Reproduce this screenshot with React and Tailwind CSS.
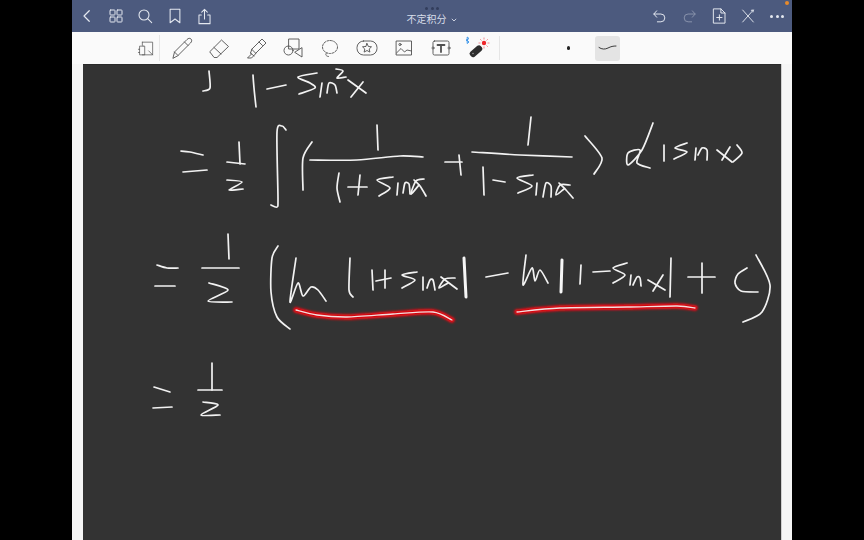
import React from "react";

const spline = (p) => {
  if (p.length === 2) return `M${p[0][0]} ${p[0][1]}L${p[1][0]} ${p[1][1]}`;
  let d = `M${p[0][0]} ${p[0][1]}`;
  for (let i = 0; i < p.length - 1; i++) {
    const a = p[Math.max(0, i - 1)], b = p[i], c = p[i + 1], e = p[Math.min(p.length - 1, i + 2)];
    const t = 0.14;
    d += `C${(b[0] + (c[0] - a[0]) * t).toFixed(1)} ${(b[1] + (c[1] - a[1]) * t).toFixed(1)} ${(c[0] - (e[0] - b[0]) * t).toFixed(1)} ${(c[1] - (e[1] - b[1]) * t).toFixed(1)} ${c[0]} ${c[1]}`;
  }
  return d;
};

const ink = [
  // first line
  [[209,71],[210,88],[203,91]],
  [[253,75],[254,88],[256,107]],
  [[267,89],[286,85]],
  [[317,73],[298,77],[310,83],[315,88],[299,94]],
  [[322,83],[320,97]],
  [[327,93],[329,83],[335,85],[337,93]],
  [[336,69],[343,71],[337,78],[346,77]],
  [[348,80],[366,93]],
  [[363,82],[351,97]],
  // second line
  [[181,151],[190,152],[203,155]],
  [[183,172],[207,170]],
  [[239,142],[240,164]],
  [[227,162],[245,164]],
  [[227,180],[242,182],[229,190],[243,189]],
  [[286,130],[282,126],[277,132],[278,198],[277,207],[271,205]],
  [[312,142],[303,158],[303,190]],
  [[310,160],[357,160],[400,156],[423,157]],
  [[377,125],[378,150]],
  [[339,173],[337,188],[340,202]],
  [[348,187],[367,187]],
  [[360,175],[358,195]],
  [[393,177],[377,180],[390,188],[379,196]],
  [[398,183],[397,195]],
  [[403,193],[405,183],[409,184],[410,194]],
  [[424,179],[416,181],[411,194],[419,185]],
  [[414,180],[420,186],[426,196]],
  [[445,162],[462,162]],
  [[459,155],[461,175]],
  [[472,152],[520,155],[572,157]],
  [[531,117],[528,145]],
  [[483,167],[484,195]],
  [[493,180],[505,182]],
  [[533,175],[517,178],[532,186],[518,193]],
  [[537,183],[536,195]],
  [[543,197],[546,183],[551,186],[551,197]],
  [[570,185],[560,185],[556,195],[564,189]],
  [[559,183],[566,190],[573,198]],
  [[585,136],[602,158],[594,174]],
  [[653,123],[642,150],[628,165],[628,153],[640,150],[637,163],[650,168]],
  [[664,145],[664,161]],
  [[687,143],[675,148],[687,152],[674,159]],
  [[696,148],[695,160]],
  [[698,155],[702,148],[707,150],[707,160]],
  [[717,150],[732,162]],
  [[730,147],[722,160]],
  [[737,145],[742,153],[733,162]],
  // third line
  [[157,265],[167,268],[178,268]],
  [[155,286],[175,286]],
  [[228,234],[229,259]],
  [[202,268],[239,268]],
  [[209,283],[228,290],[208,301],[232,302]],
  [[278,246],[272,258],[271,292],[277,317],[290,329]],
  [[296,258],[290,302],[298,283],[303,296],[311,287],[318,290],[326,301]],
  [[350,258],[349,290],[353,297]],
  [[372,270],[373,290]],
  [[376,281],[391,278]],
  [[385,270],[385,288]],
  [[417,272],[402,275],[415,280],[402,288]],
  [[423,277],[423,290]],
  [[427,288],[430,280],[433,280],[435,290]],
  [[455,278],[445,279],[439,288],[448,283]],
  [[441,277],[449,283],[457,289]],
  [[486,277],[508,273]],
  [[526,255],[523,285],[532,268],[535,281],[540,270],[548,283]],
  [[581,265],[580,284]],
  [[593,272],[610,271]],
  [[627,263],[613,268],[625,275],[613,283]],
  [[631,275],[630,285]],
  [[633,285],[637,277],[640,278],[641,286]],
  [[648,280],[665,290]],
  [[663,275],[653,291]],
  [[671,258],[670,297]],
  [[688,277],[715,277]],
  [[702,263],[702,293]],
  [[747,268],[738,274],[735,283],[741,291],[758,292]],
  [[756,255],[770,285],[762,312],[743,322]],
  // fourth line
  [[154,387],[170,392]],
  [[153,408],[172,407]],
  [[212,363],[212,390]],
  [[198,390],[222,390]],
  [[203,402],[218,405],[201,415],[220,415]],
];
const bold = [
  [[464,258],[466,297]],
  [[562,260],[561,292]],
];
const red = [
  [[296,310],[317,315],[347,317],[393,314],[433,312],[452,320]],
  [[517,312],[560,308],[627,307],[677,306],[695,308]],
];

const Ic = ({ children, size = 18, stroke = "#e4e8f0", sw = 1.3, opacity }) => (
  <svg width={size} height={size} viewBox="0 0 24 24" fill="none" stroke={stroke} strokeWidth={sw} strokeLinecap="round" strokeLinejoin="round" opacity={opacity}>
    {children}
  </svg>
);

const TopBtn = ({ children }) => (
  <div className="flex w-[29.4px] items-center justify-center">{children}</div>
);
const Tool = ({ children }) => (
  <div className="flex w-[37px] items-center justify-center">{children}</div>
);

const T = (p) => <Ic size={24} stroke="#505050" sw={0.9} {...p} />;

export default function App() {
  return (
    <div className="flex h-[540px] w-[864px] overflow-hidden bg-black font-['Liberation_Sans','Noto_Sans_CJK_SC',sans-serif]">
      <div className="w-[72px] shrink-0" />
      <div className="relative flex w-[720px] flex-col">
        {/* top bar */}
        <div className="relative flex h-8 items-center justify-between bg-[#4c5a7e]">
          <div className="flex">
            <TopBtn>
              <Ic size={18} sw={1.6}><path d="M15 5l-7 7 7 7" /></Ic>
            </TopBtn>
            <TopBtn>
              <Ic size={16} sw={1.5}>
                <rect x="3" y="3" width="7.5" height="7.5" rx="1" />
                <rect x="13.5" y="3" width="7.5" height="7.5" rx="1" />
                <rect x="3" y="13.5" width="7.5" height="7.5" rx="1" />
                <rect x="13.5" y="13.5" width="7.5" height="7.5" rx="1" />
              </Ic>
            </TopBtn>
            <TopBtn>
              <Ic size={16} sw={1.6}><circle cx="10.5" cy="10.5" r="7.5" /><path d="M16 16l6 6" /></Ic>
            </TopBtn>
            <TopBtn>
              <Ic size={18} sw={1.4}><path d="M5.500 3h13v18L12 16l-6.500 5z" /></Ic>
            </TopBtn>
            <TopBtn>
              <Ic size={19} sw={1.3}><path d="M8 10H5v11h14V10h-3M12 15V3M8.500 6.500L12 3l3.500 3.500" /></Ic>
            </TopBtn>
          </div>
          <div className="absolute inset-x-0 top-0 flex flex-col items-center">
            <div className="mt-[6.5px] flex gap-[2.5px]">
              <span className="h-[3px] w-[3px] rounded-full bg-[#323d5c]" />
              <span className="h-[3px] w-[3px] rounded-full bg-[#323d5c]" />
              <span className="h-[3px] w-[3px] rounded-full bg-[#323d5c]" />
            </div>
            <div className="mt-[3px] -ml-[1px] flex items-center gap-[4px] text-[10px] leading-[14px] text-[#d9deea]">
              <span>不定积分</span>
              <svg width="6" height="4" viewBox="0 0 6 4" fill="none" stroke="#d9deea" strokeWidth="0.9"><path d="M0.8 0.8L3 3l2.2-2.2" /></svg>
            </div>
          </div>
          <div className="flex">
            <TopBtn>
              <Ic size={17} sw={1.4}><path d="M8 4L4 8.500 8 13M4 8.500h10a5.500 5.500 0 010 11H9" /></Ic>
            </TopBtn>
            <TopBtn>
              <Ic size={17} sw={1.4} opacity={0.4}><path d="M16 4l4 4.500-4 4.500M20 8.500H10a5.500 5.500 0 000 11h5" /></Ic>
            </TopBtn>
            <TopBtn>
              <Ic size={18} sw={1.3}><path d="M5 2.500h9.500L20 8v13.500H5zM14.500 2.500V8H20M12.500 10.500v7M9 14h7" /></Ic>
            </TopBtn>
            <TopBtn>
              <Ic size={16} sw={1.4}><path d="M4 3l16 18M20 3L4 21M17 3.500l3-.5-.5 3" /></Ic>
            </TopBtn>
            <TopBtn>
              <div className="flex gap-[2.5px]">
                <span className="h-[3px] w-[3px] rounded-full bg-[#e4e8f0]" />
                <span className="h-[3px] w-[3px] rounded-full bg-[#e4e8f0]" />
                <span className="h-[3px] w-[3px] rounded-full bg-[#e4e8f0]" />
              </div>
            </TopBtn>
          </div>
          <span className="absolute right-[3px] top-[1px] h-[4px] w-[4px] rounded-full bg-[#e88a2a]" />
        </div>

        {/* toolbar */}
        <div className="flex h-8 items-center bg-[#fafafa] pl-[60px]">
          <div className="flex h-[26px] w-[28px] items-center justify-center border-r border-[#e6e6e6]">
            <Ic size={19} stroke="#505050" sw={0.9}>
              <path d="M8 4h13v16H8M8 4v4M21 20l-5-5" />
              <path d="M9 9H4.500v11H11V9H9M4.500 13H3M4.500 17H3" />
            </Ic>
          </div>
          <div className="ml-[3.5px] flex">
            <Tool>
              <T><path d="M3 22l1.500-6L17 3.500c1.500-1.500 3-1.500 4-.5s1 2.500-.5 4L8 19.500zM4.500 16L8 19.500M14.500 6l3.500 3.500" /></T>
            </Tool>
            <Tool>
              <T><path d="M3 15.500L14.500 4l7 6.500L10 21.500H7.500zM7 11.500l7 6.500" /></T>
            </Tool>
            <Tool>
              <T><path d="M8 13l10-10 4 4-10 10zM8 13l-1.500 4 1 1-4 4h4l2-2 1-1 1.500-2M6.500 17l3.500 3M15 6l3.500 3.500" /></T>
            </Tool>
            <Tool>
              <T><rect x="8" y="3" width="10" height="10" /><circle cx="7.500" cy="14.500" r="4.500" /><path d="M21 12v9l-7-4.500z" /></T>
            </Tool>
            <Tool>
              <T>
                <g strokeDasharray="2 1.300">
                  <ellipse cx="12" cy="11" rx="7.500" ry="6.500" />
                  <path d="M8.500 17c-1.500 1.500-.5 3.500 2.500 3.500" />
                </g>
              </T>
            </Tool>
            <Tool>
              <T><rect x="2" y="5" width="20" height="14" rx="6.500" /><path d="M12 7.500l1.400 3 3.100.3-2.300 2.200.7 3.100-2.900-1.600-2.900 1.600.7-3.100-2.300-2.200 3.100-.3z" /></T>
            </Tool>
            <Tool>
              <T><rect x="4.500" y="5" width="15" height="14" /><circle cx="8" cy="8.500" r="1.100" /><path d="M4.500 17l4.500-4.500 3.500 3.500 2.500-2 4.500 1" /></T>
            </Tool>
            <Tool>
              <T><rect x="4" y="5" width="16" height="14" rx="1.500" /><path d="M8.500 9h7M12 9v7" strokeWidth="1.800" /><circle cx="4" cy="12" r="1" fill="#fafafa" /><circle cx="20" cy="12" r="1" fill="#fafafa" /></T>
            </Tool>
            <Tool>
              <svg width="24" height="24" viewBox="0 0 24 24" fill="none">
                <rect x="3" y="12" width="14" height="6.500" rx="2.500" transform="rotate(-40 10 15.250)" fill="#2e2e2e" />
                <circle cx="7" cy="17.500" r="0.800" fill="#999" />
                <circle cx="18" cy="7" r="2.200" fill="#f0262b" />
                <path d="M18 1.500v2M18 10.500v2M12.500 7h2M21.500 7h2M14.200 3.200l1.300 1.300M20.500 9.500l1.300 1.300M21.800 3.200l-1.300 1.300" stroke="#f0707a" strokeWidth="0.800" />
                <path d="M-0.500 3l3.500 3-1.800 1.500V1l1.800 1.500L-0.500 5" stroke="#2f8fe8" strokeWidth="0.900" transform="translate(0 0)" />
              </svg>
            </Tool>
          </div>
          <div className="ml-[2px] h-[24px] w-px bg-[#e6e6e6]" />
          <div className="ml-[67px] h-[3.500px] w-[3.500px] rounded-full bg-[#222222]" />
          <div className="ml-[25px] flex h-[25px] w-[25px] items-center justify-center rounded-[3px] bg-[#e4e4e4]">
            <svg width="19" height="8" viewBox="0 0 19 8" fill="none"><path d="M1 3.500c3 2 6 2 9 .500 3-1.500 5-2 8-2" stroke="#3a3a3a" strokeWidth="1" strokeLinecap="round" /></svg>
          </div>
        </div>

        {/* page */}
        <div className="flex min-h-0 flex-1 bg-[#f6f6f6]">
          <div className="w-[11px] shrink-0" />
          <div className="h-full flex-1 border-t border-[#2a2a2a] bg-[#333333]">
            <svg className="block h-full w-full" viewBox="83 65 698 475" fill="none" strokeLinecap="round" strokeLinejoin="round">
              <defs>
                <filter id="glow" x="-10%" y="-400%" width="120%" height="900%">
                  <feGaussianBlur stdDeviation="1.300" />
                </filter>
                <filter id="soft" x="-5%" y="-5%" width="110%" height="110%">
                  <feGaussianBlur stdDeviation="0.250" />
                </filter>
              </defs>
              {red.map((p, i) => (
                <g key={i}>
                  <path d={spline(p)} stroke="#ff0a14" strokeWidth="5.500" filter="url(#glow)" />
                  <path d={spline(p)} stroke="#d0060f" strokeWidth="3.200" />
                  <path d={spline(p)} stroke="#f4dede" strokeWidth="1.300" />
                </g>
              ))}
              <g filter="url(#soft)">
                {ink.map((p, i) => (
                  <path key={i} d={spline(p)} stroke="#f2f2f2" strokeWidth="1.700" />
                ))}
                {bold.map((p, i) => (
                  <path key={i} d={spline(p)} stroke="#f6f6f6" strokeWidth="3" />
                ))}
              </g>
            </svg>
          </div>
          <div className="w-[11px] shrink-0 border-l border-[#cfcfcf]" />
        </div>
      </div>
      <div className="w-[72px] shrink-0" />
    </div>
  );
}
